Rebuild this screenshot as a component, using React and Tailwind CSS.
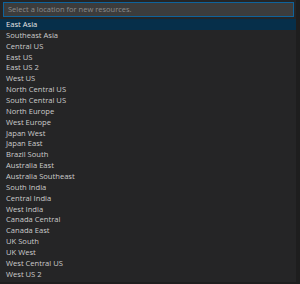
import React from 'react';

const regions = [
  'East Asia', 'Southeast Asia', 'Central US', 'East US', 'East US 2', 'West US',
  'North Central US', 'South Central US', 'North Europe', 'West Europe', 'Japan West',
  'Japan East', 'Brazil South', 'Australia East', 'Australia Southeast', 'South India',
  'Central India', 'West India', 'Canada Central', 'Canada East', 'UK South', 'UK West',
  'West Central US', 'West US 2',
];

export default function App() {
  return (
    <div className="w-[300px] h-[284px] bg-[#1e1e1e] flex overflow-hidden" style={{ fontFamily: '"Open Sans", "Liberation Sans", sans-serif' }}>
      <div className="flex-1 flex flex-col bg-[#252526] mb-[2px]">
        <div className="pt-[2px] pl-[3px] pr-[2px]">
          <div className="h-[15px] bg-[#3c3c3c] border border-[#0e639c] flex items-center px-[4px] text-[7.5px] text-[#8b8b8b]">
            Select a location for new resources.
          </div>
        </div>
        <ul className="mt-[2px] text-[7.6px] text-[#cccccc]">
          {regions.map((r, i) => (
            <li
              key={r}
              className={`h-[10.87px] leading-[10.87px] pl-[6px] ${i === 0 ? 'bg-[#062f4a] text-[#e6e6e6]' : ''}`}
            >
              {r}
            </li>
          ))}
        </ul>
      </div>
      <div className="w-[4px] bg-[#1e1e1e]" />
    </div>
  );
}
